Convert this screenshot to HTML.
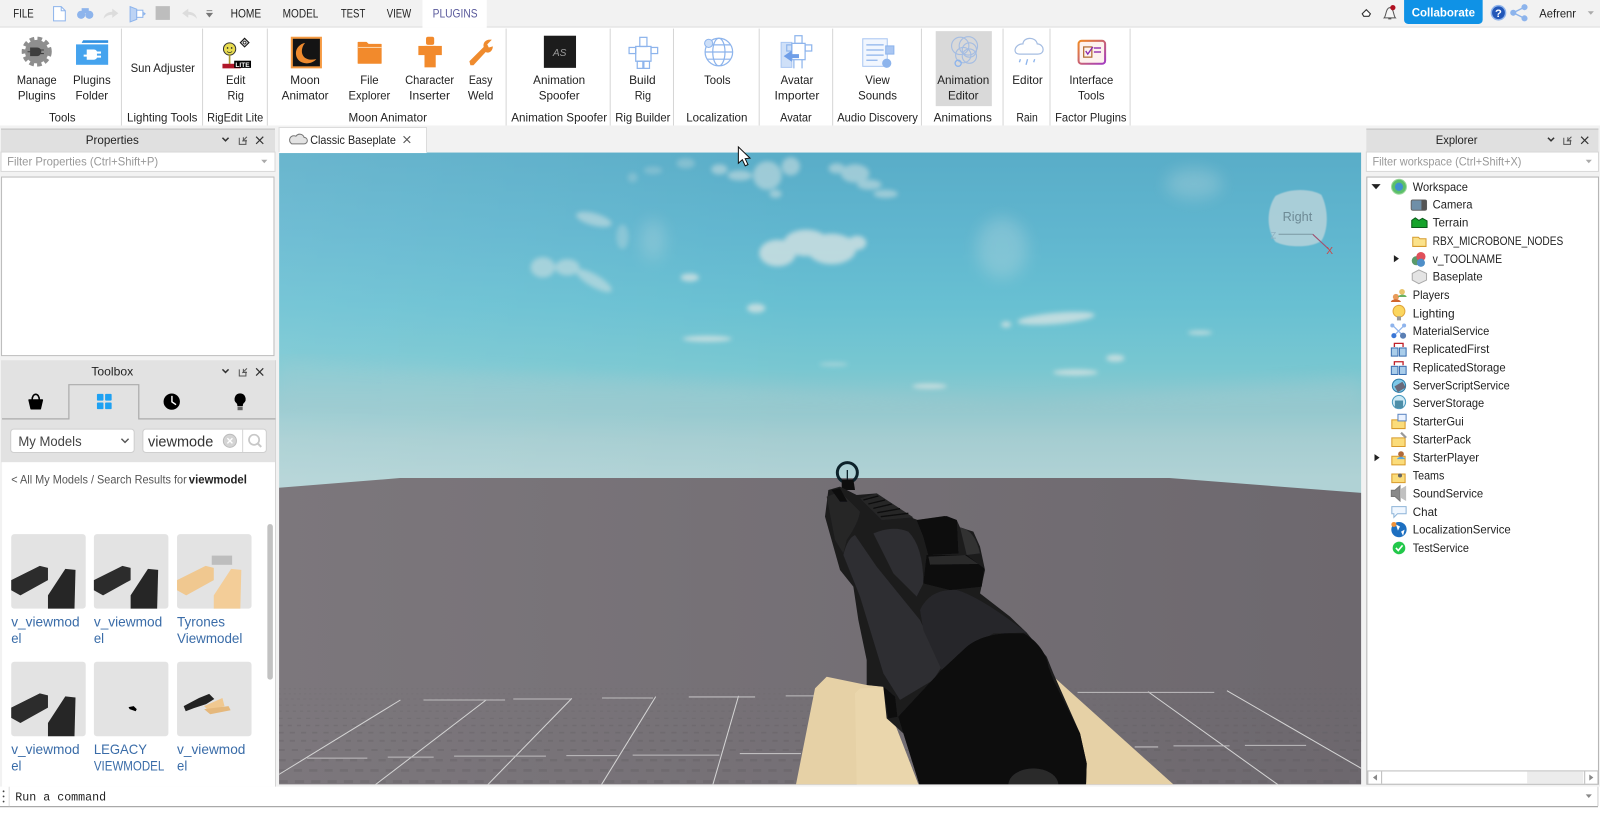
<!DOCTYPE html>
<html><head><meta charset="utf-8"><title>Studio</title>
<style>
html,body{margin:0;padding:0;background:#fff;width:1600px;height:840px;overflow:hidden}
svg{display:block}
text{font-family:"Liberation Sans",sans-serif;font-size:12px;fill:#222}
.c{text-anchor:middle}
.g{fill:#999}
.l{fill:#3a6ca8;font-size:14px}
.ln{stroke:#d4d4d4;stroke-width:1;fill:none}
.s{fill:none;stroke:#8db4ec;stroke-width:1.2}
.sep{stroke:#d6d6d6;stroke-width:1}
</style></head><body>
<svg width="1600" height="840" viewBox="0 0 1568 823.2" xmlns="http://www.w3.org/2000/svg">
<defs>
<filter id="b05"><feGaussianBlur stdDeviation=".6"/></filter>
<filter id="b2"><feGaussianBlur stdDeviation="2.4"/></filter>
<filter id="b4"><feGaussianBlur stdDeviation="4"/></filter>
<filter id="b8"><feGaussianBlur stdDeviation="8"/></filter>
<linearGradient id="sky" x1="0" y1="149.5" x2="0" y2="469" gradientUnits="userSpaceOnUse">
<stop offset="0" stop-color="#59adc8"/><stop offset=".25" stop-color="#60b6cf"/><stop offset=".47" stop-color="#68c0d2"/><stop offset=".66" stop-color="#78c7d1"/><stop offset=".78" stop-color="#92c8ce"/><stop offset=".88" stop-color="#a5cdd1"/><stop offset="1" stop-color="#b0d2d5"/></linearGradient>
<linearGradient id="hz" x1="273" y1="0" x2="800" y2="0" gradientUnits="userSpaceOnUse"><stop offset="0" stop-color="#fff" stop-opacity=".1"/><stop offset="1" stop-color="#fff" stop-opacity="0"/></linearGradient>
<linearGradient id="gr" x1="273" y1="0" x2="1334" y2="0" gradientUnits="userSpaceOnUse"><stop offset="0" stop-color="#7c777c"/><stop offset="1" stop-color="#6d686e"/></linearGradient>
<linearGradient id="fac" x1="0" y1="0" x2="1" y2="1"><stop offset="0" stop-color="#f08a24"/><stop offset="1" stop-color="#a23bc4"/></linearGradient>
<clipPath id="vp"><rect x="273.5" y="149.5" width="1060.5" height="619.2"/></clipPath>
<g id="blk"><polygon points="0,45 28,31 36,33 36,45 9,60 0,55" fill="#2c2c2c"/><polygon points="53,34 63,35 62,73 36,73 36,60" fill="#262626"/></g>
</defs>

<rect width="1568" height="823.2" fill="#fff"/>
<!-- chrome -->
<rect width="1568" height="26" fill="#f2f2f2"/>
<rect y="26" width="1568" height="1" fill="#dcdcdc"/>
<rect x="414" y="0" width="63" height="27" fill="#fff"/>
<rect y="123" width="1568" height="648" fill="#f2f2f2"/>

<!-- ribbon separators -->
<g class="sep"><line x1="119" y1="28" x2="119" y2="123"/><line x1="198.5" y1="28" x2="198.5" y2="123"/><line x1="262" y1="28" x2="262" y2="123"/><line x1="496" y1="28" x2="496" y2="123"/><line x1="598" y1="28" x2="598" y2="123"/><line x1="660" y1="28" x2="660" y2="123"/><line x1="744" y1="28" x2="744" y2="123"/><line x1="816" y1="28" x2="816" y2="123"/><line x1="903" y1="28" x2="903" y2="123"/><line x1="983" y1="28" x2="983" y2="123"/><line x1="1029" y1="28" x2="1029" y2="123"/><line x1="1107.5" y1="28" x2="1107.5" y2="123"/></g>
<rect x="917" y="30.5" width="55" height="73.5" fill="#d9d9d9"/>

<!-- viewport -->
<g clip-path="url(#vp)">
<rect x="273.5" y="149.5" width="1060.5" height="340" fill="url(#sky)"/>
<rect x="273.5" y="149.5" width="540" height="340" fill="url(#hz)"/>
<polygon points="273,352 600,370 1000,395 1334,370 1334,400 273,400" fill="#a9ccd0" opacity=".3" filter="url(#b8)"/>
<g fill="#dfe6e4">
<g filter="url(#b2)" opacity=".5">
<ellipse cx="532" cy="262" rx="12" ry="10"/><ellipse cx="556" cy="262" rx="12" ry="8"/><ellipse cx="582" cy="275" rx="20" ry="6" transform="rotate(30 582 275)"/>
<ellipse cx="582" cy="215" rx="18" ry="6" transform="rotate(15 582 215)"/><ellipse cx="610" cy="232" rx="6" ry="12" opacity=".6"/>
<ellipse cx="672" cy="160" rx="9" ry="5" opacity=".6"/><ellipse cx="705" cy="166" rx="8" ry="5"/><ellipse cx="725" cy="172" rx="12" ry="5"/><ellipse cx="752" cy="172" rx="14" ry="14"/><ellipse cx="775" cy="163" rx="9" ry="9"/><ellipse cx="760" cy="190" rx="6" ry="4"/>
<ellipse cx="820" cy="165" rx="8" ry="5"/><ellipse cx="838" cy="170" rx="14" ry="9"/><ellipse cx="852" cy="181" rx="12" ry="5"/><ellipse cx="868" cy="190" rx="12" ry="4"/>
<ellipse cx="620" cy="174" rx="5" ry="5" opacity=".5"/><ellipse cx="640" cy="167" rx="9" ry="4" opacity=".5"/>
</g>
<g filter="url(#b2)" opacity=".72">
<ellipse cx="762" cy="248" rx="18" ry="13"/><ellipse cx="790" cy="238" rx="22" ry="13"/><ellipse cx="815" cy="244" rx="24" ry="15"/><ellipse cx="840" cy="238" rx="9" ry="7"/>
<ellipse cx="1035" cy="312" rx="38" ry="5.5" transform="rotate(-5 1035 312)"/><ellipse cx="986" cy="318" rx="5" ry="3"/>
<ellipse cx="911" cy="378.5" rx="17" ry="2.6"/><ellipse cx="1054" cy="365" rx="22" ry="3"/><ellipse cx="1093" cy="351" rx="9" ry="3.5"/><ellipse cx="1176" cy="326" rx="12" ry="2"/><ellipse cx="693" cy="332" rx="24" ry="3"/><ellipse cx="676" cy="272" rx="9" ry="4"/><ellipse cx="741" cy="302" rx="9" ry="4.5"/><ellipse cx="817" cy="357" rx="14" ry="2" opacity=".6"/>
</g>
<g filter="url(#b8)" opacity=".25">
<ellipse cx="982" cy="243" rx="25" ry="30"/><ellipse cx="1170" cy="180" rx="28" ry="15"/><ellipse cx="640" cy="235" rx="12" ry="20"/>
</g>
</g>
<polygon points="273,478 392,468.5 1146,468.5 1334,483 1334,769 273,769" fill="url(#gr)"/>
<!-- studs -->
<g fill="none" stroke="#5c585c" stroke-opacity=".28">
<line x1="273" y1="766" x2="1334" y2="766" stroke-width="3" stroke-dasharray="9 7"/>
<line x1="273" y1="755" x2="1334" y2="755" stroke-width="2.6" stroke-dasharray="8 7"/>
<line x1="273" y1="745" x2="1334" y2="745" stroke-width="2.3" stroke-dasharray="7 7"/>
<line x1="273" y1="735" x2="1334" y2="735" stroke-width="2" stroke-dasharray="6 7"/>
<line x1="273" y1="726" x2="1334" y2="726" stroke-width="1.8" stroke-dasharray="5 6"/>
<line x1="273" y1="718" x2="1334" y2="718" stroke-width="1.6" stroke-dasharray="5 6"/>
<line x1="273" y1="711" x2="1334" y2="711" stroke-width="1.4" stroke-dasharray="4 5"/>
<line x1="273" y1="704" x2="1334" y2="704" stroke-width="1.2" stroke-dasharray="4 5" stroke-opacity=".2"/>
<line x1="273" y1="697" x2="1334" y2="697" stroke-width="1.1" stroke-dasharray="3 4" stroke-opacity=".2"/>
<line x1="273" y1="691" x2="1334" y2="691" stroke-width="1" stroke-dasharray="3 4" stroke-opacity=".18"/>
<line x1="273" y1="685" x2="1334" y2="685" stroke-width="1" stroke-dasharray="3 3" stroke-opacity=".15"/>
<line x1="273" y1="680" x2="1334" y2="680" stroke-width="1" stroke-dasharray="2 3" stroke-opacity=".12"/>
<line x1="273" y1="675" x2="1334" y2="675" stroke-width="1" stroke-dasharray="2 3" stroke-opacity=".1"/>
</g>
<!-- grid -->
<g class="ln">
<line x1="273.3" y1="759" x2="392.4" y2="686"/><line x1="367.9" y1="769" x2="476.4" y2="686"/><line x1="478" y1="769" x2="560.4" y2="684.4"/><line x1="589.4" y1="769" x2="642.6" y2="682.7"/><line x1="698.6" y1="769" x2="723.8" y2="682"/>
<line x1="1125" y1="677.8" x2="1252.4" y2="769"/><line x1="1202.4" y1="676.9" x2="1334" y2="753"/>
</g>
<g stroke="#bfbdbf" stroke-width="1" fill="none">
<path d="M415 686H495M503 685H560M590 684H640M675 683H740M770 682H800"/>
<path d="M301 743H360M380 742H425M445 741H535M555 740.5H605M620 740H705M725 738.5H785"/>
<path d="M1056 678.5H1125H1190M1112 732H1135M1150 731H1205M1220 730.5H1280"/>
</g>
<!-- gun: coordinates from local crop -->
<g transform="translate(744.8,431.2) scale(.3267)">
<polygon points="200,710 320,735 370,740 400,840 475,1033 108,1033 165,745" fill="#e6d1a6"/>
<polygon points="285,760 300,745 370,742 400,840 475,1033 290,1033" fill="#ead6ac"/>
<polygon points="875,705 1240,1033 975,1033 900,800" fill="#e6d1a6"/>
<g filter="url(#b05)">
<circle cx="262" cy="98" r="30" fill="none" stroke="#10222c" stroke-width="9"/>
<line x1="262" y1="90" x2="262" y2="120" stroke="#10222c" stroke-width="4"/>
<polygon points="245,118 280,118 285,150 245,150" fill="#111"/>
<path d="M205,150 L240,140 L290,165 L350,160 L460,235 L500,250 L560,228 L590,240 L600,262 L640,275 L660,320 L675,390 L660,460 L750,530 L800,578 L860,650 L880,700 L960,880 L980,970 L978,1033 L478,1033 L430,880 L380,835 L370,740 L320,735 L320,660 L295,540 L280,440 L240,390 L195,230 Z" fill="#1b1b1d"/>
<path d="M200,170 L240,155 L300,215 Q295,250 260,300 L250,340 L225,300 Z" fill="#262628"/>
<polygon points="215,150 240,145 262,185 240,185" fill="#0c0c0c"/>
<polygon points="300,175 350,160 460,232 365,240" fill="#262628"/>
<g stroke="#0d0d0d" stroke-width="4"><line x1="310" y1="180" x2="355" y2="168"/><line x1="325" y1="192" x2="375" y2="180"/><line x1="340" y1="205" x2="395" y2="192"/><line x1="352" y1="218" x2="420" y2="206"/><line x1="362" y1="230" x2="445" y2="220"/></g>
<path d="M340,280 Q400,255 445,275 Q490,320 490,430 L470,470 L400,400 Z" fill="#2d2d30"/>
<path d="M250,345 Q262,295 285,285 L350,380 L480,540 L545,680 L520,720 L420,780 L370,700 L300,470 Z" fill="#2e2e31"/>
<path d="M600,262 Q645,270 660,340 L620,345 Z" fill="#303033"/>
<polygon points="470,240 555,228 590,240 595,340 505,345 490,290" fill="#090909"/>
<polygon points="500,345 620,345 672,385 665,440 570,450 490,430" fill="#0b0b0b"/>
<polygon points="505,350 615,345 655,372 510,374" fill="#2a2a2c"/>
<path d="M480,510 Q510,445 590,450 Q660,470 800,578 L700,580 L620,630 L545,690 L490,570 Z" fill="#28282b"/>
<path d="M545,690 L620,620 C660,590 700,578 790,580 C830,600 860,640 865,680 L880,720 L960,880 L980,970 L978,1033 L478,1033 L415,830 Z" fill="#0a0a0b"/>
<ellipse cx="820" cy="1035" rx="75" ry="50" fill="#2a2a2c"/>
<polygon points="370,740 405,770 412,830 385,835" fill="#0c0c0c"/>
</g>
</g>
<!-- gizmo -->
<path d="M1250 192C1265 184 1285 185 1295 191C1302 205 1302 225 1295 236C1285 243 1262 243 1250 237C1241 225 1241 205 1250 192Z" fill="#bfd6dc" opacity=".78" filter="url(#b05)"/>
<text x="1271.5" y="216.5" class="c" textLength="29" lengthAdjust="spacingAndGlyphs" style="font-size:13px;fill:#6d8a95">Right</text>
<line x1="1253" y1="229.6" x2="1286.5" y2="229.6" stroke="#7a98a3"/>
<line x1="1286.5" y1="229.6" x2="1302" y2="244" stroke="#a05070" stroke-width="1.1"/>
<text x="1248" y="233.5" class="c" style="font-size:9px;fill:#8fb0c0">Z</text>
<text x="1303" y="249" class="c" style="font-size:10px;fill:#c44">X</text>
</g>
<!-- cursor -->
<path d="M723.6 144V160L727.5 156.5L730.3 162.5L733 161.3L730.3 155.5L735 155Z" fill="#fff" stroke="#111" stroke-width="1"/>

<!-- tab -->
<rect x="273.5" y="125" width="144.5" height="25" fill="#fff"/>
<path d="M273.5 149V125H418V149" fill="none" stroke="#dcdcdc"/>
<path d="M286 141H298A3.2 3.2 0 0 0 298 134.6A4.5 4.5 0 0 0 290 133.5A4 4 0 0 0 286 141Z" fill="#e3e3e3" stroke="#777"/>
<text x="304" y="141" textLength="84" lengthAdjust="spacingAndGlyphs">Classic Baseplate</text>
<path d="M395.5 133.5L402 140M402 133.5L395.5 140" stroke="#555" stroke-width="1.1"/>

<!-- Properties panel -->
<rect x="1" y="126" width="268.5" height="23" fill="#e0e0e0"/><rect x="1" y="126" width="268.5" height="1" fill="#bfbfbf"/>
<rect x="1" y="149" width="268.5" height="19" fill="#fff" stroke="#d8d8d8" stroke-width="1"/>
<rect x="1.5" y="173.5" width="267" height="175" fill="#fff" stroke="#bdbdbd"/>
<text x="110" y="141" class="c" textLength="52" lengthAdjust="spacingAndGlyphs">Properties</text>
<path d="M218 135L221 138L224 135" fill="none" stroke="#333" stroke-width="1.5"/>
<path d="M234.5 135V141.5H241V137M237.5 138.5L242 134M238.5 134.5V138H242" fill="none" stroke="#555" stroke-width="1"/>
<path d="M251 134L258 141M258 134L251 141" stroke="#333" stroke-width="1.2"/>
<text x="7" y="162" class="g" textLength="148" lengthAdjust="spacingAndGlyphs">Filter Properties (Ctrl+Shift+P)</text>
<path d="M256 156.5H262L259 160Z" fill="#aaa"/>

<!-- Toolbox -->
<rect x="1" y="353" width="269" height="100" fill="#e2e2e2"/>
<rect x="2" y="453" width="268" height="318" fill="#fff"/>
<line x1="270" y1="353" x2="270" y2="771" stroke="#d5d5d5"/>
<text x="110" y="368" class="c" textLength="41" lengthAdjust="spacingAndGlyphs">Toolbox</text>
<path d="M218 362L221 365L224 362" fill="none" stroke="#333" stroke-width="1.5"/>
<path d="M234.5 362V368.5H241V364M237.5 365.5L242 361M238.5 361.5V365H242" fill="none" stroke="#555" stroke-width="1"/>
<path d="M251 361L258 368M258 361L251 368" stroke="#333" stroke-width="1.2"/>
<path d="M2 410.5H67.5V377H136V410.5H270" fill="none" stroke="#ababab" stroke-width="1.2"/>
<!-- bag -->
<path d="M28.5 392H41.5L39.5 400.5H30.5Z" fill="#000" stroke="#000" stroke-width="1.5" stroke-linejoin="round"/><path d="M31.5 392C31.5 384.5 38.5 384.5 38.5 392" fill="none" stroke="#000" stroke-width="1.6"/>
<!-- grid -->
<g fill="#1ea1f2"><rect x="95" y="386" width="6.4" height="6.6" rx=".8"/><rect x="103" y="386" width="6.4" height="6.6" rx=".8"/><rect x="95" y="394.4" width="6.4" height="6.6" rx=".8"/><rect x="103" y="394.4" width="6.4" height="6.6" rx=".8"/></g>
<!-- clock -->
<circle cx="168.3" cy="393.6" r="8" fill="#000"/><path d="M168.5 388V393.8L172.5 396.6" fill="none" stroke="#fff" stroke-width="1.4"/>
<!-- bulb -->
<path d="M235.3 385.5A5.5 5.5 0 0 1 239 395C238 396 238 397 238 398H232.6C232.6 397 232.6 396 231.6 395A5.5 5.5 0 0 1 235.3 385.5Z" fill="#000"/><rect x="232.8" y="398.6" width="5" height="3.4" fill="#666"/>
<!-- select -->
<rect x="10.5" y="420.5" width="121" height="23" rx="3" fill="#fff" stroke="#cfcfcf"/>
<text x="18" y="437" textLength="62" lengthAdjust="spacingAndGlyphs" style="font-size:14px;fill:#444">My Models</text>
<path d="M119 430L122.5 433.5L126 430" fill="none" stroke="#555" stroke-width="1.4"/>
<rect x="140" y="420.5" width="121" height="23" rx="3" fill="#fff" stroke="#cfcfcf"/>
<text x="145" y="437.5" textLength="64" lengthAdjust="spacingAndGlyphs" style="font-size:14.5px;fill:#333">viewmode</text>
<circle cx="225.3" cy="432" r="6.4" fill="#d4d4d4" stroke="#bcbcbc"/><path d="M222.8 429.5L227.8 434.5M227.8 429.5L222.8 434.5" stroke="#fff" stroke-width="1.3"/>
<line x1="237.8" y1="421" x2="237.8" y2="443" stroke="#d5d5d5"/>
<circle cx="249" cy="431" r="5" fill="none" stroke="#c8c8c8" stroke-width="1.7"/><line x1="252.5" y1="434.5" x2="256" y2="438" stroke="#c8c8c8" stroke-width="2"/>
<text x="11" y="474" textLength="172" lengthAdjust="spacingAndGlyphs" style="font-size:12px;fill:#555">&lt; All My Models / Search Results for</text>
<text x="185" y="474" textLength="57" lengthAdjust="spacingAndGlyphs" style="font-size:12px;font-weight:bold;fill:#222">viewmodel</text>
<!-- thumbs -->
<g fill="#e3e3e3"><rect x="11" y="523.5" width="73" height="73" rx="3"/><rect x="92" y="523.5" width="73" height="73" rx="3"/><rect x="173.5" y="523.5" width="73" height="73" rx="3"/><rect x="11" y="648.5" width="73" height="73" rx="3"/><rect x="92" y="648.5" width="73" height="73" rx="3"/><rect x="173.5" y="648.5" width="73" height="73" rx="3"/></g>
<use href="#blk" x="11" y="523.5"/><use href="#blk" x="92" y="523.5"/><use href="#blk" x="11" y="648.5"/>
<rect x="207.5" y="544.5" width="20" height="9" fill="#bdbdbd"/>
<polygon points="173.5,568.5 201.5,554.5 209.5,556.5 209.5,568.5 182.5,583.5 173.5,578.5" fill="#f0c890"/>
<polygon points="226.5,557.5 236.5,558.5 235.5,596.5 209.5,596.5 209.5,583.5" fill="#f3cd98"/>
<polygon points="126,693 131,692 134,695 133,697 127,695" fill="#000"/>
<polygon points="180,692 195,684 205,680 210,685 202,690 190,694 182,697" fill="#222"/>
<polygon points="200,692 218,684 220,692 205,697" fill="#f0c890"/>
<polygon points="200,695 224,692 226,696 206,700" fill="#e5b87c"/>
<rect x="262" y="513.7" width="5.4" height="152.3" rx="2.5" fill="#c2c2c2"/>
<g>
<text class="l" x="11" y="614" textLength="67" lengthAdjust="spacingAndGlyphs">v_viewmod</text><text class="l" x="11" y="630" textLength="10" lengthAdjust="spacingAndGlyphs">el</text>
<text class="l" x="92" y="614" textLength="67" lengthAdjust="spacingAndGlyphs">v_viewmod</text><text class="l" x="92" y="630" textLength="10" lengthAdjust="spacingAndGlyphs">el</text>
<text class="l" x="173.5" y="614" textLength="47" lengthAdjust="spacingAndGlyphs">Tyrones</text><text class="l" x="173.5" y="630" textLength="64" lengthAdjust="spacingAndGlyphs">Viewmodel</text>
<text class="l" x="11" y="739" textLength="67" lengthAdjust="spacingAndGlyphs">v_viewmod</text><text class="l" x="11" y="755" textLength="10" lengthAdjust="spacingAndGlyphs">el</text>
<text class="l" x="92" y="739" textLength="52" lengthAdjust="spacingAndGlyphs">LEGACY</text><text class="l" x="92" y="755" textLength="69" lengthAdjust="spacingAndGlyphs">VIEWMODEL</text>
<text class="l" x="173.5" y="739" textLength="67" lengthAdjust="spacingAndGlyphs">v_viewmod</text><text class="l" x="173.5" y="755" textLength="10" lengthAdjust="spacingAndGlyphs">el</text>
</g>

<!-- Explorer panel -->
<rect x="1339" y="126" width="227.5" height="23" fill="#e0e0e0"/><rect x="1339" y="126" width="227.5" height="1" fill="#bfbfbf"/>
<rect x="1339" y="149" width="227.5" height="19" fill="#fff" stroke="#d8d8d8"/>
<rect x="1339.5" y="173.5" width="227" height="595" fill="#fff" stroke="#b5b5b5"/>
<text x="1427.5" y="141" class="c" textLength="41" lengthAdjust="spacingAndGlyphs">Explorer</text>
<path d="M1517 135L1520 138L1523 135" fill="none" stroke="#333" stroke-width="1.5"/>
<path d="M1532.5 135V141.5H1539V137M1535.5 138.5L1540 134M1536.5 134.5V138H1540" fill="none" stroke="#555"/>
<path d="M1549.5 134L1556.5 141M1556.5 134L1549.5 141" stroke="#333" stroke-width="1.2"/>
<text x="1345" y="162" class="g" textLength="146" lengthAdjust="spacingAndGlyphs">Filter workspace (Ctrl+Shift+X)</text>
<path d="M1554 156.5H1560L1557 160Z" fill="#aaa"/>
<!-- explorer hscroll -->
<rect x="1340.5" y="755.5" width="225.5" height="13" fill="#fff" stroke="#bdbdbd"/><rect x="1496.6" y="756" width="55" height="12" fill="#ececec"/><line x1="1354" y1="756" x2="1354" y2="768" stroke="#bbb"/><line x1="1553" y1="756" x2="1553" y2="768" stroke="#bbb"/>
<path d="M1349.5 759L1345.5 762L1349.5 765Z" fill="#888"/><path d="M1557.5 759L1561.5 762L1557.5 765Z" fill="#888"/>
<!-- tree arrows -->
<path d="M1344 180.5H1353L1348.5 185.5Z" fill="#222"/><path d="M1366 250L1371 253.5L1366 257Z" fill="#222"/><path d="M1347 445L1352 448.5L1347 452Z" fill="#222"/>
<!-- tree text -->
<g>
<text x="1384.5" y="187" textLength="54" lengthAdjust="spacingAndGlyphs">Workspace</text>
<text x="1404" y="204.5" textLength="39" lengthAdjust="spacingAndGlyphs">Camera</text>
<text x="1404" y="222" textLength="35" lengthAdjust="spacingAndGlyphs">Terrain</text>
<text x="1404" y="240" textLength="128" lengthAdjust="spacingAndGlyphs">RBX_MICROBONE_NODES</text>
<text x="1404" y="257.5" textLength="68" lengthAdjust="spacingAndGlyphs">v_TOOLNAME</text>
<text x="1404" y="275" textLength="49" lengthAdjust="spacingAndGlyphs">Baseplate</text>
<text x="1384.5" y="293" textLength="36" lengthAdjust="spacingAndGlyphs">Players</text>
<text x="1384.5" y="311" textLength="41" lengthAdjust="spacingAndGlyphs">Lighting</text>
<text x="1384.5" y="328.5" textLength="75" lengthAdjust="spacingAndGlyphs">MaterialService</text>
<text x="1384.5" y="346" textLength="75" lengthAdjust="spacingAndGlyphs">ReplicatedFirst</text>
<text x="1384.5" y="364" textLength="91" lengthAdjust="spacingAndGlyphs">ReplicatedStorage</text>
<text x="1384.5" y="381.5" textLength="95" lengthAdjust="spacingAndGlyphs">ServerScriptService</text>
<text x="1384.5" y="399" textLength="70" lengthAdjust="spacingAndGlyphs">ServerStorage</text>
<text x="1384.5" y="417" textLength="50" lengthAdjust="spacingAndGlyphs">StarterGui</text>
<text x="1384.5" y="434.5" textLength="57" lengthAdjust="spacingAndGlyphs">StarterPack</text>
<text x="1384.5" y="452.5" textLength="65" lengthAdjust="spacingAndGlyphs">StarterPlayer</text>
<text x="1384.5" y="470" textLength="31" lengthAdjust="spacingAndGlyphs">Teams</text>
<text x="1384.5" y="487.5" textLength="69" lengthAdjust="spacingAndGlyphs">SoundService</text>
<text x="1384.5" y="505.5" textLength="24" lengthAdjust="spacingAndGlyphs">Chat</text>
<text x="1384.5" y="523" textLength="96" lengthAdjust="spacingAndGlyphs">LocalizationService</text>
<text x="1384.5" y="541" textLength="55" lengthAdjust="spacingAndGlyphs">TestService</text>
</g>
<!-- tree icons -->
<circle cx="1371" cy="183" r="7.3" fill="#5bbf6a" stroke="#9ad89a"/><circle cx="1371" cy="183" r="4" fill="#3f8fd0"/>
<rect x="1383" y="196" width="15" height="10" rx="1.5" fill="#6f8fa8" stroke="#666"/><rect x="1393" y="196" width="5" height="10" fill="#555"/>
<path d="M1383.5 223V216L1387 213.5L1390.5 216L1394 214L1398.5 216.5V223Z" fill="#15a32b" stroke="#0a5a1a"/>
<path d="M1384.5 241.5V232.5H1390L1391.5 234H1397.5V241.5Z" fill="#fbe28b" stroke="#d69c2e"/>
<circle cx="1388" cy="255.5" r="4.5" fill="#5a9a6a"/><circle cx="1392.5" cy="251.5" r="4.5" fill="#e0505a"/><circle cx="1392.5" cy="257.5" r="4" fill="#4f8fc8"/>
<path d="M1384 268L1390.5 264.5L1398 268V274.5L1390.5 278L1384 274.5Z" fill="#e4e4e4" stroke="#aaa"/>
<circle cx="1368" cy="291" r="3" fill="#e89b5a"/><path d="M1363 296C1363.5 292.5 1372 292.5 1373 296Z" fill="#d0652c"/><circle cx="1374" cy="286" r="2.8" fill="#e8c46a"/><path d="M1370 291C1371 288 1378 288 1378.5 291Z" fill="#68b060"/>
<circle cx="1371" cy="305" r="5.8" fill="#fbd65e" stroke="#e0a53a"/><rect x="1369" y="310" width="4" height="4" fill="#999"/>
<g stroke="#8fb4ec" stroke-width="1.2"><line x1="1365" y1="319" x2="1375" y2="329"/><line x1="1376" y1="319" x2="1366" y2="329"/></g><circle cx="1364.5" cy="319" r="2" fill="#8fb4ec"/><circle cx="1376" cy="319" r="2" fill="#8fb4ec"/><circle cx="1366" cy="329" r="2.5" fill="#3a77d6"/><circle cx="1375" cy="329" r="3" fill="#5b7fb4"/>
<g id="rp"><rect x="1363.5" y="341" width="6.5" height="8" fill="#a9cdea" stroke="#3a6fb0"/><rect x="1371.5" y="341" width="6.5" height="8" fill="#a9cdea" stroke="#3a6fb0"/><path d="M1366.5 340V336.5H1375V340" fill="none" stroke="#c0202a" stroke-width="1.3"/></g>
<use href="#rp" y="18"/>
<circle cx="1371" cy="378" r="6.5" fill="#7dc8e8" stroke="#2e7ea8"/><rect x="1367.5" y="376" width="9" height="6.5" fill="#6a6a7a" transform="rotate(-30 1372 379)"/>
<circle cx="1371" cy="394" r="6.5" fill="#cdeaf6" stroke="#4a9ac0"/><rect x="1367" y="392.5" width="8" height="7.5" fill="#4d8ea8"/>
<g id="fd"><path d="M1364 420V411.5H1377V420Z" fill="#fbdc7a" stroke="#d89a2a"/></g>
<rect x="1370" y="406" width="8" height="6.5" fill="#eaf2ff" stroke="#5a84c0"/>
<use href="#fd" y="17.6"/><path d="M1373 424L1378 429" stroke="#999" stroke-width="2.2"/>
<use href="#fd" y="35.6"/><circle cx="1373" cy="445" r="2.8" fill="#b06a3a"/><path d="M1369 450C1370 447 1376 447 1377 450Z" fill="#5aa8e0"/>
<use href="#fd" y="53"/><circle cx="1372" cy="466" r="2" fill="#666"/>
<path d="M1363.5 480.5H1367L1372 476V491L1367 486.5H1363.5Z" fill="#8a8a8a" stroke="#777"/><path d="M1373 479L1378 476V491L1373 488Z" fill="#c0c0c0"/>
<path d="M1364 496.5H1378V503.5H1369.5L1366 507V503.5H1364Z" fill="#f0f7ff" stroke="#8db4d8"/>
<circle cx="1371" cy="519" r="7.5" fill="#1d6fc0"/><path d="M1368 514L1372 516L1370 520ZM1373 521L1376.5 519L1375 525Z" fill="#fff"/><circle cx="1366" cy="514" r="2.5" fill="#f0923a"/>
<circle cx="1371" cy="537" r="6.2" fill="#22c84a"/><path d="M1368 537L1370.3 539.5L1374.5 534.5" fill="none" stroke="#fff" stroke-width="1.6"/>

<!-- command bar -->
<rect x="0" y="771" width="1568" height="19.5" fill="#fff"/>
<line x1="0" y1="790.5" x2="1566" y2="790.5" stroke="#a9a9a9" stroke-width="1.2"/>
<line x1="1566" y1="771" x2="1566" y2="790" stroke="#cfcfcf"/>
<line x1="9" y1="771" x2="9" y2="790" stroke="#ddd"/>
<g fill="#444"><circle cx="3.5" cy="775.5" r=".9"/><circle cx="3.5" cy="780.5" r=".9"/><circle cx="3.5" cy="785.5" r=".9"/></g>
<text x="15" y="784.5" textLength="89" style="font-family:'Liberation Mono',monospace;font-size:12px" lengthAdjust="spacingAndGlyphs">Run a command</text>
<path d="M1554 778.5H1560L1557 782Z" fill="#888"/>

<!-- top bar text -->
<text x="13" y="17" textLength="20" lengthAdjust="spacingAndGlyphs">FILE</text>
<text x="226" y="17" textLength="30" lengthAdjust="spacingAndGlyphs">HOME</text>
<text x="277" y="17" textLength="35" lengthAdjust="spacingAndGlyphs">MODEL</text>
<text x="334" y="17" textLength="24" lengthAdjust="spacingAndGlyphs">TEST</text>
<text x="379" y="17" textLength="24" lengthAdjust="spacingAndGlyphs">VIEW</text>
<text x="424" y="17" textLength="44" lengthAdjust="spacingAndGlyphs" style="fill:#5a5a9c">PLUGINS</text>
<!-- QAT icons -->
<path d="M52.5 6.5H60L64 10.5V20.5H52.5Z" fill="#fff" stroke="#8db4ec"/><path d="M60 6.5V10.5H64" fill="none" stroke="#8db4ec"/>
<circle cx="79.5" cy="14.5" r="4" fill="#8db4ec"/><circle cx="87.5" cy="14.5" r="4" fill="#8db4ec"/><rect x="80" y="8" width="7" height="5" fill="#8db4ec"/>
<path d="M101.5 18.5C102 13 107 11.5 110 11.5V8.5L116 13L110 17.5V14.5C107 14.5 104 15.5 101.5 18.5Z" fill="#dcdcdc"/>
<path d="M127.5 6.5L134 9V19L127.5 21.5Z" fill="#bcd3f4" stroke="#8db4ec"/><rect x="134" y="10" width="6" height="7" fill="#fff" stroke="#8db4ec"/><path d="M140.5 11.5L143 13.5L140.5 15.5Z" fill="#8db4ec"/>
<rect x="152.5" y="6" width="14" height="13.5" fill="#bdbdbd"/>
<path d="M193 18.5C192.5 13 187.5 11.5 184.5 11.5V8.5L178.5 13L184.5 17.5V14.5C187.5 14.5 190.5 15.5 193 18.5Z" fill="#dcdcdc"/>
<path d="M202.5 10.5H208M202.5 13H208L205.2 16.5Z" stroke="#777" fill="#777" stroke-width=".8"/>
<!-- right top -->
<path d="M1335 13.5L1339 9.5L1343 13.5L1341.5 16H1336.5Z" fill="#fff" stroke="#333" stroke-width="1.1"/>
<path d="M1356.5 17.5C1358.5 15.5 1358 8 1362 7.5C1366 8 1365.5 15.5 1367.5 17.5ZM1360.5 18.5H1363.5" fill="#f5f5f5" stroke="#555"/>
<circle cx="1365" cy="7.5" r="2.6" fill="#b01020"/>
<path d="M1376 0H1453V19.5A4 4 0 0 1 1449 23.5H1380A4 4 0 0 1 1376 19.5Z" fill="#0f92e6"/>
<text x="1414.5" y="16" class="c" textLength="62" lengthAdjust="spacingAndGlyphs" style="fill:#fff;font-weight:bold">Collaborate</text>
<circle cx="1468.5" cy="12.5" r="7" fill="#2257b8" stroke="#8fb4ec" stroke-width="1.4"/>
<text x="1468.5" y="16.5" class="c" style="fill:#fff;font-size:11px;font-weight:bold">?</text>
<g fill="#8db4ec"><circle cx="1483" cy="12.5" r="3"/><circle cx="1494" cy="7" r="3"/><circle cx="1494" cy="18" r="3"/></g><path d="M1483 12.5L1494 7M1483 12.5L1494 18" stroke="#8db4ec" stroke-width="1.4"/>
<text x="1508.5" y="17" textLength="36" lengthAdjust="spacingAndGlyphs">Aefrenr</text>
<path d="M1556 11H1562L1559 14.5Z" fill="#aaa"/>

<!-- ribbon labels -->
<g>
<text class="c" x="36" y="82.5" textLength="39" lengthAdjust="spacingAndGlyphs">Manage</text><text class="c" x="36" y="97.5" textLength="37" lengthAdjust="spacingAndGlyphs">Plugins</text>
<text class="c" x="90" y="82.5" textLength="37" lengthAdjust="spacingAndGlyphs">Plugins</text><text class="c" x="90" y="97.5" textLength="32" lengthAdjust="spacingAndGlyphs">Folder</text>
<text class="c" x="159.5" y="70.5" textLength="63" lengthAdjust="spacingAndGlyphs">Sun Adjuster</text>
<text class="c" x="231" y="82.5" textLength="19" lengthAdjust="spacingAndGlyphs">Edit</text><text class="c" x="231" y="97.5" textLength="16" lengthAdjust="spacingAndGlyphs">Rig</text>
<text class="c" x="299" y="82.5" textLength="29" lengthAdjust="spacingAndGlyphs">Moon</text><text class="c" x="299" y="97.5" textLength="46" lengthAdjust="spacingAndGlyphs">Animator</text>
<text class="c" x="362" y="82.5" textLength="18" lengthAdjust="spacingAndGlyphs">File</text><text class="c" x="362" y="97.5" textLength="41" lengthAdjust="spacingAndGlyphs">Explorer</text>
<text class="c" x="421" y="82.5" textLength="48" lengthAdjust="spacingAndGlyphs">Character</text><text class="c" x="421" y="97.5" textLength="40" lengthAdjust="spacingAndGlyphs">Inserter</text>
<text class="c" x="471" y="82.5" textLength="23" lengthAdjust="spacingAndGlyphs">Easy</text><text class="c" x="471" y="97.5" textLength="25" lengthAdjust="spacingAndGlyphs">Weld</text>
<text class="c" x="548" y="82.5" textLength="51" lengthAdjust="spacingAndGlyphs">Animation</text><text class="c" x="548" y="97.5" textLength="40" lengthAdjust="spacingAndGlyphs">Spoofer</text>
<text class="c" x="629.5" y="82.5" textLength="26" lengthAdjust="spacingAndGlyphs">Build</text><text class="c" x="630" y="97.5" textLength="16" lengthAdjust="spacingAndGlyphs">Rig</text>
<text class="c" x="703" y="82.5" textLength="26" lengthAdjust="spacingAndGlyphs">Tools</text>
<text class="c" x="781" y="82.5" textLength="32" lengthAdjust="spacingAndGlyphs">Avatar</text><text class="c" x="781" y="97.5" textLength="44" lengthAdjust="spacingAndGlyphs">Importer</text>
<text class="c" x="860" y="82.5" textLength="24" lengthAdjust="spacingAndGlyphs">View</text><text class="c" x="860" y="97.5" textLength="38" lengthAdjust="spacingAndGlyphs">Sounds</text>
<text class="c" x="944" y="82.5" textLength="51" lengthAdjust="spacingAndGlyphs">Animation</text><text class="c" x="944" y="97.5" textLength="30" lengthAdjust="spacingAndGlyphs">Editor</text>
<text class="c" x="1007" y="82.5" textLength="30" lengthAdjust="spacingAndGlyphs">Editor</text>
<text class="c" x="1069.5" y="82.5" textLength="43" lengthAdjust="spacingAndGlyphs">Interface</text><text class="c" x="1069.5" y="97.5" textLength="26" lengthAdjust="spacingAndGlyphs">Tools</text>
<text class="c" x="61" y="119" textLength="26" lengthAdjust="spacingAndGlyphs">Tools</text>
<text class="c" x="159" y="119" textLength="69" lengthAdjust="spacingAndGlyphs">Lighting Tools</text>
<text class="c" x="230.5" y="119" textLength="55" lengthAdjust="spacingAndGlyphs">RigEdit Lite</text>
<text class="c" x="380" y="119" textLength="77" lengthAdjust="spacingAndGlyphs">Moon Animator</text>
<text class="c" x="548" y="119" textLength="94" lengthAdjust="spacingAndGlyphs">Animation Spoofer</text>
<text class="c" x="630" y="119" textLength="54" lengthAdjust="spacingAndGlyphs">Rig Builder</text>
<text class="c" x="702.5" y="119" textLength="60" lengthAdjust="spacingAndGlyphs">Localization</text>
<text class="c" x="780" y="119" textLength="31" lengthAdjust="spacingAndGlyphs">Avatar</text>
<text class="c" x="860" y="119" textLength="79" lengthAdjust="spacingAndGlyphs">Audio Discovery</text>
<text class="c" x="943.5" y="119" textLength="57" lengthAdjust="spacingAndGlyphs">Animations</text>
<text class="c" x="1006.5" y="119" textLength="21" lengthAdjust="spacingAndGlyphs">Rain</text>
<text class="c" x="1069" y="119" textLength="70" lengthAdjust="spacingAndGlyphs">Factor Plugins</text>
</g>

<!-- ribbon icons -->
<!-- manage plugins -->
<circle cx="36" cy="50.6" r="11.5" fill="#8e8e8e"/><circle cx="36" cy="50.6" r="13" fill="none" stroke="#8e8e8e" stroke-width="3.5" stroke-dasharray="4.5 3.2"/>
<path d="M30 47H36.5C39 47 40 49 40 50.5C40 52 39 54.5 36.5 54.5H30ZM40 49H43M40 52.5H43M27 50.7H30" fill="#3d3d3d" stroke="#3d3d3d"/>
<!-- plugins folder -->
<path d="M74.5 42H80L81.5 39.5H106V42Z" fill="#2f8fe0"/><rect x="74.5" y="43.5" width="31.5" height="20" fill="#45a3ee"/>
<path d="M82 53.5H85V48.5H92C94 48.5 95 50 95 50.5H99V52.5H95V54.5H99V56.5H95C95 57 94 58.5 92 58.5H85V55.5H82Z" fill="#fff"/>
<!-- edit rig -->
<circle cx="225" cy="48" r="6" fill="#e8dc50" stroke="#333"/><circle cx="223" cy="47" r=".8" fill="#222"/><circle cx="227" cy="47" r=".8" fill="#222"/><path d="M222.5 50.5Q225 52.5 227.5 50.5" fill="none" stroke="#222" stroke-width=".7"/>
<line x1="225" y1="54" x2="225" y2="63" stroke="#a89a30" stroke-width="1.6"/>
<rect x="218" y="62.5" width="18" height="4.5" fill="#b0182a"/>
<path d="M239.7 37.5L244 41.8L239.7 46L235.5 41.8Z" fill="#bbb" stroke="#111"/><circle cx="239.7" cy="41.8" r="1.3" fill="#fff" stroke="#111" stroke-width=".6"/>
<rect x="229.5" y="59.5" width="16.5" height="7" fill="#000"/><text x="237.7" y="65.5" class="c" textLength="14" lengthAdjust="spacingAndGlyphs" style="font-size:6.5px;font-weight:bold;fill:#fff">LITE</text>
<!-- moon animator -->
<rect x="286" y="37" width="28.5" height="29" fill="#141414" stroke="#f59a42" stroke-width="2"/>
<path d="M299 42C293 49 295 61 310 58C304 65 290 63 290 52C290 47 294 43 299 42Z" fill="#ee8a2e"/>
<!-- file explorer -->
<path d="M351 41.5H359L361 43.5H373.5V62H351Z" fill="#f28a2c" stroke="#f28a2c" stroke-linejoin="round"/>
<rect x="351" y="46" width="23" height="1" fill="#fcd6ac"/>
<!-- character -->
<g fill="#f28a2c"><rect x="417.5" y="36" width="8" height="8" rx="2"/><rect x="410" y="45" width="23" height="9"/><rect x="416" y="45" width="11" height="21"/></g>
<!-- wrench -->
<path d="M461 64L460 60L474 46C473 42 476 38 482 39L477.5 43.5L479 46.5L483 45.5C483 50 479 53 476 51L464 64Z" fill="#ef8b2e"/>
<!-- spoofer -->
<rect x="533" y="35" width="31.5" height="31.5" fill="#1c1c1c"/>
<text x="548.5" y="55" class="c" style="font-size:10px;font-style:italic;fill:#9a9a9a">AS</text>
<!-- build rig -->
<g class="s"><rect x="627" y="36.6" width="7" height="9"/><rect x="623" y="45.5" width="15" height="14.5"/><rect x="616.5" y="46.5" width="6.5" height="6"/><rect x="638" y="46.5" width="6.5" height="6"/><rect x="624.5" y="60" width="5.5" height="7"/><rect x="631" y="60" width="5.5" height="7"/></g>
<!-- globe -->
<g class="s"><circle cx="704.5" cy="51" r="13.5"/><ellipse cx="704.5" cy="51" rx="6" ry="13.5"/><path d="M691 51H718M693 44H716M693 58H716"/></g>
<circle cx="694.5" cy="42.5" r="4" fill="#cddff8" stroke="#8db4ec"/>
<!-- avatar importer -->
<path d="M765.5 41.5H776V66H765.5Z" fill="#cfe0f8" stroke="#a9c6f2"/>
<g class="s"><rect x="779" y="35" width="7" height="7.5"/><rect x="776" y="42.5" width="13" height="16"/><rect x="771" y="44" width="5" height="6"/><rect x="789" y="44" width="6.5" height="6"/><path d="M778 58.5V67M786 58.5V67"/></g>
<path d="M768 55L776 49.5V53H783V57H776V60.5Z" fill="#6f9ee8"/>
<!-- view sounds -->
<rect x="845.5" y="38" width="24" height="27" fill="#f1f6fe" stroke="#a9c6f2"/>
<path d="M849 44H866M849 49H866M849 54H866M849 59H860" class="s"/>
<rect x="868" y="45" width="8" height="8" fill="#a9c6f2" stroke="#8db4ec"/><circle cx="869" cy="62" r="4.5" fill="#8db4ec"/>
<!-- animation editor -->
<g fill="none" stroke="#a5bde2" stroke-width="1.1"><circle cx="941" cy="45" r="8.5"/><circle cx="950" cy="49" r="7"/><circle cx="944" cy="54" r="7.5"/><circle cx="950" cy="55" r="7"/><circle cx="949" cy="45" r="9"/></g><circle cx="939" cy="62" r="3" fill="none" stroke="#8db4ec" stroke-width="1.3"/>
<!-- rain -->
<path d="M999 53H1017C1025 53 1023 43 1016.5 43C1015 35.5 1003 36 1002.5 43C994 43 992 53 999 53Z" fill="#fff" stroke="#a5bde2" stroke-width="1.2"/>
<path d="M1000 58L999 61M1007 58L1005.5 63.5M1014 58L1013 61" stroke="#8db4ec" stroke-width="1.3"/>
<!-- interface tools -->
<rect x="1057" y="40" width="26" height="22.5" rx="3" fill="#fdf2ee" stroke="url(#fac)" stroke-width="2"/>
<rect x="1062" y="46" width="8" height="10" fill="none" stroke="#b06a30" stroke-width="1.2"/><path d="M1064 50L1066 53L1071 46" fill="none" stroke="#8a2ab0" stroke-width="1.3"/><path d="M1072 47H1079M1072 51H1079" stroke="#9a3ab0" stroke-width="1.5"/>
</svg>
</body></html>
